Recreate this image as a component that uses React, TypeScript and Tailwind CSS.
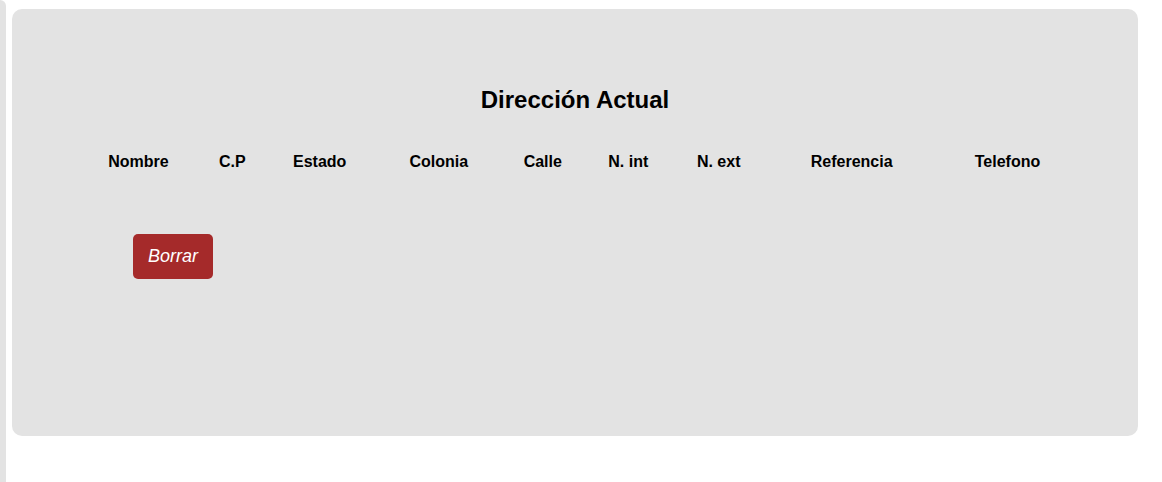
import React from "react";

const headers = [
  "Nombre",
  "C.P",
  "Estado",
  "Colonia",
  "Calle",
  "N. int",
  "N. ext",
  "Referencia",
  "Telefono",
];

export default function App() {
  return (
    <div
      className="flex h-[482px] w-[1162px] bg-white text-black"
      style={{ fontFamily: '"Liberation Sans", Arial, sans-serif' }}
    >
      <div className="h-full w-[6px] shrink-0 rounded-tr-[8px] bg-[#e3e3e3]" />
      <div className="ml-[6px] mt-[9px] flex h-[427px] w-[1126px] shrink-0 flex-col rounded-[10px] bg-[#e3e3e3] pt-[77px]">
        <h2 className="text-center text-[24px] font-bold leading-[28px]">
          Dirección Actual
        </h2>
        <div className="ml-[71px] mt-[39px] grid grid-cols-[111px_76.6px_98.2px_140px_68px_103px_77.8px_188.2px_123.4px]">
          {headers.map((h) => (
            <div key={h} className="text-center text-[16px] font-bold leading-[18px]">
              {h}
            </div>
          ))}
        </div>
        <div className="ml-[121px] mt-[63px]">
          <button className="h-[45px] w-[80px] rounded-[5px] bg-[#a52a2a] text-[18px] italic leading-[21px] text-white">
            Borrar
          </button>
        </div>
      </div>
    </div>
  );
}
